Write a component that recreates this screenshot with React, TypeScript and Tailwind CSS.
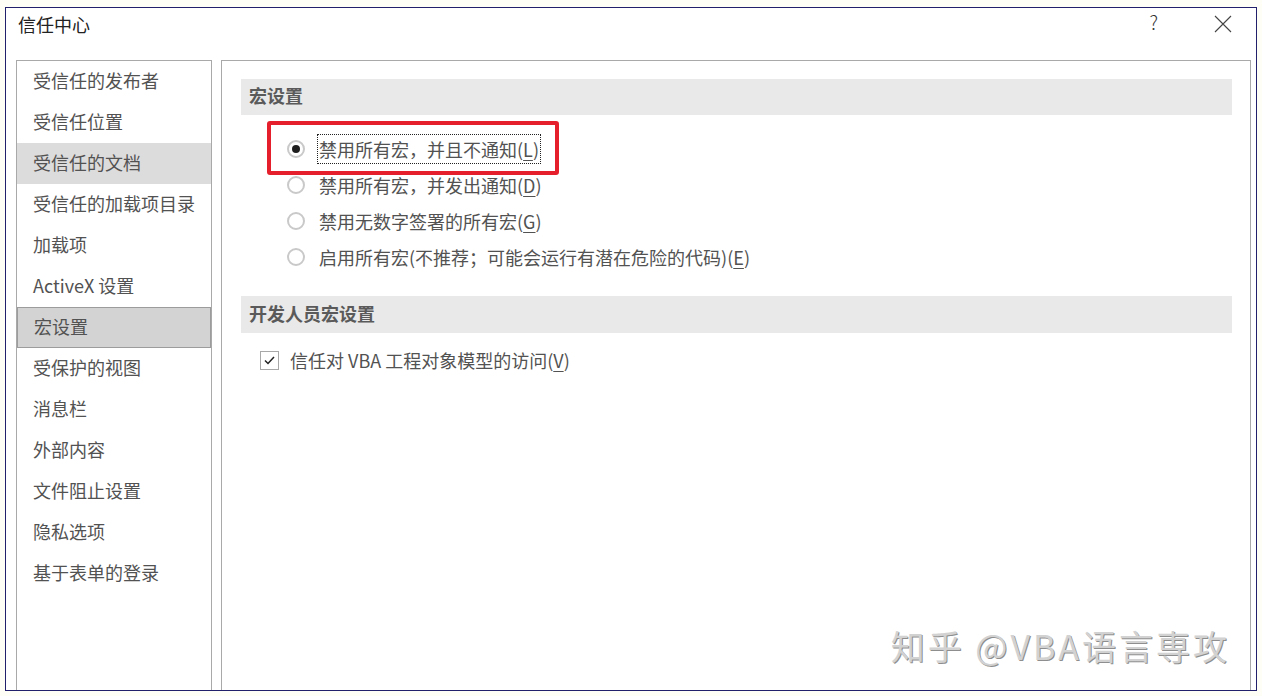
import React from 'react';

const navItems = [
  '受信任的发布者',
  '受信任位置',
  '受信任的文档',
  '受信任的加载项目录',
  '加载项',
  'ActiveX 设置',
  '宏设置',
  '受保护的视图',
  '消息栏',
  '外部内容',
  '文件阻止设置',
  '隐私选项',
  '基于表单的登录',
];

const macroOptions = [
  { label: '禁用所有宏，并且不通知', key: 'L', checked: true },
  { label: '禁用所有宏，并发出通知', key: 'D', checked: false },
  { label: '禁用无数字签署的所有宏', key: 'G', checked: false },
  { label: '启用所有宏(不推荐；可能会运行有潜在危险的代码)', key: 'E', checked: false },
];

const Radio = ({ checked }: { checked: boolean }) => (
  <span className="w-[18px] h-[18px] rounded-full border-2 border-[#c9c9c9] bg-white flex items-center justify-center shrink-0">
    {checked && <span className="w-[8px] h-[8px] rounded-full bg-[#1e1e1e]" />}
  </span>
);

const App = () => {
  return (
    <div
      className="w-[1262px] h-[696px] bg-[#fefef7] pl-[5px] pt-[7px] overflow-hidden"
      style={{ fontFamily: '"Noto Sans CJK SC", "Noto Sans", sans-serif' }}
    >
      <div className="w-[1252px] h-[684px] border border-[#22206a] bg-white flex flex-col">
        {/* title bar */}
        <div className="h-[52px] shrink-0 flex items-start pt-[4px] pl-[12px] pr-[24px]">
          <span className="text-[18px] leading-[24px] text-[#222]">信任中心</span>
          <div className="ml-auto flex items-center gap-[56px]">
            <span className="text-[19px] leading-[22px] text-[#333] font-light -mt-[1px]">?</span>
            <svg width="18" height="18" viewBox="0 0 18 18" className="mt-[2px]">
              <path d="M1 1 L17 17 M17 1 L1 17" stroke="#444" strokeWidth="1.1" fill="none" />
            </svg>
          </div>
        </div>

        <div className="flex-1 flex pl-[10px] pr-[5px] gap-[9px] min-h-0">
          {/* left nav */}
          <div className="w-[196px] h-full border border-b-0 border-[#a9a9a9]">
            {navItems.map((item, i) => (
              <div
                key={item}
                className={
                  'h-[41px] flex items-center pl-[16px] pb-[2px] text-[18px] text-[#525252] ' +
                  (i === 2 ? 'bg-[#dddcdc] ' : '') +
                  (i === 6 ? 'bg-[#d3d3d3] border border-[#9c9c9c] pl-[15px] ' : '')
                }
              >
                {item}
              </div>
            ))}
          </div>

          {/* right content */}
          <div className="flex-1 h-full border border-b-0 border-[#a9a9a9] relative pl-[19px] pr-[18px] pt-[18px]">
            <div className="h-[36px] bg-[#e9e9e9] flex items-center pl-[8px] pb-[3px] text-[18px] font-bold text-[#5a5a5a]">
              宏设置
            </div>

            <div className="relative pt-[16px] pl-[46px]">
              <div className="absolute left-[26px] top-[6px] w-[292px] h-[54px] border-[4px] border-[#e51f2b] rounded-[3px]" />
              {macroOptions.map((opt) => (
                <div key={opt.key} className="h-[36px] flex items-center gap-[12px] pb-[1px]">
                  <Radio checked={opt.checked} />
                  <span
                    className={
                      'text-[18px] leading-[28px] text-[#525252] px-[1px] ' +
                      (opt.checked ? 'border border-dotted border-[#222]' : 'border border-transparent')
                    }
                  >
                    {opt.label}(<span className="underline underline-offset-[3px]">{opt.key}</span>)
                  </span>
                </div>
              ))}
            </div>

            <div className="h-[37px] mt-[21px] bg-[#e9e9e9] flex items-center pl-[8px] pb-[3px] text-[18px] font-bold text-[#5a5a5a]">
              开发人员宏设置
            </div>

            <div className="h-[56px] flex items-center pl-[19px] gap-[11px] pb-[1px]">
              <span className="w-[19px] h-[19px] border-[1.5px] border-[#a8a8a8] bg-white flex items-center justify-center">
                <svg width="11" height="9" viewBox="0 0 11 9">
                  <path d="M1 4.5 L4 7.5 L10 1" stroke="#222" strokeWidth="1.5" fill="none" />
                </svg>
              </span>
              <span className="text-[18px] text-[#525252]">
                信任对 VBA 工程对象模型的访问(<span className="underline underline-offset-[3px]">V</span>)
              </span>
            </div>

            <div className="absolute right-[20px] bottom-[24px] text-[34px] leading-[40px] text-[#d2d2d2] tracking-[3px] [text-shadow:1px_1px_0_#8e8e8e]">
              知乎 @VBA语言専攻
            </div>
          </div>
        </div>
      </div>
    </div>
  );
};

export default App;
